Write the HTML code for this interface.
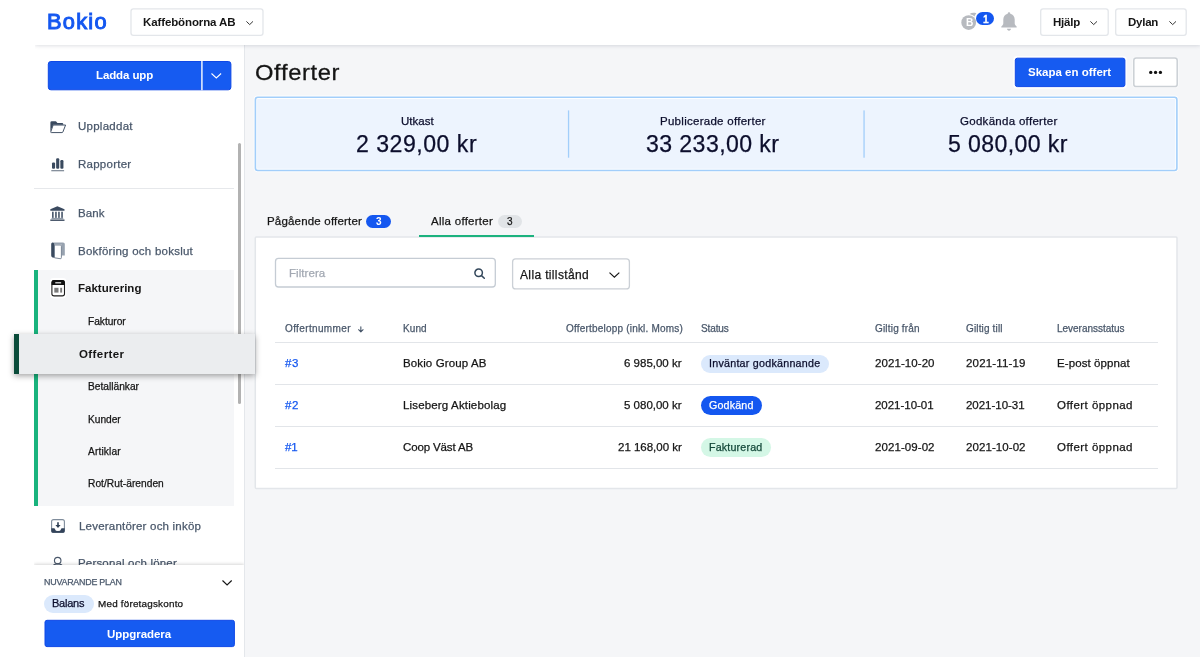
<!DOCTYPE html>
<html lang="sv">
<head>
<meta charset="utf-8">
<title>Offerter – Bokio</title>
<style>
*{box-sizing:border-box;margin:0;padding:0}
html,body{width:1200px;height:657px;overflow:hidden;background:#fff}
body{font-family:"Liberation Sans",sans-serif;font-size:11.5px;color:#151515;position:relative}
.layer{position:absolute;left:0;top:0;width:1200px;height:657px;pointer-events:none;will-change:transform}
.layer>*{position:absolute}
.t{position:absolute;white-space:nowrap;line-height:1;-webkit-text-stroke:0.25px;transform:rotate(0.01deg)}
svg{position:absolute;overflow:visible}
.blue{background:#1457f0}
.hbtn{top:8.5px;height:27.2px;border:1px solid #e2e5e9;border-radius:2.5px;background:#fff}
.inp{border:1px solid #c3c8ce;border-radius:3px;background:#fff}
.hr{left:275px;width:883px;height:1px;background:#e2e5e9}
.pill{border-radius:10px;height:18.5px}
</style>
</head>
<body>

<!-- ================= MAIN ================= -->
<div class="layer" id="main" style="z-index:1">
  <div style="left:245px;top:45px;width:955px;height:612px;background:#f5f6f8"></div>

  <svg style="left:0;top:0" width="1200" height="120" viewBox="0 0 1200 120">
    <rect x="1013.3" y="56" width="113.5" height="32.8" rx="3.6" fill="#fff" opacity=".9"/>
    <rect x="1015.3" y="58.2" width="109.6" height="28.4" rx="2" fill="#165bf1" stroke="#0f48e6" stroke-width="1"/>
    <rect x="1132.4" y="56.7" width="46.2" height="31.4" rx="3.6" fill="#fff" opacity=".7"/>
    <rect x="1133.8" y="58.1" width="43.4" height="28.5" rx="2.4" fill="#fff" stroke="#cbd0d5" stroke-width="1.5"/>
    <circle cx="1150.75" cy="72.4" r="1.65" fill="#111"/><circle cx="1155.55" cy="72.4" r="1.65" fill="#111"/><circle cx="1160.4" cy="72.4" r="1.65" fill="#111"/>
  </svg>

  <!-- summary -->
  <svg style="left:0;top:90px" width="1200" height="90" viewBox="0 90 1200 90">
    <rect x="255.4" y="97.3" width="921.5" height="73.2" rx="2.4" fill="#edf4fe" stroke="#fff" stroke-width="3.4" stroke-opacity=".85"/>
    <rect x="255.4" y="97.3" width="921.5" height="73.2" rx="2.4" fill="none" stroke="#a2cefa" stroke-width="1.6"/>
    <rect x="567.9" y="110.4" width="1.3" height="47.3" fill="#a2cefa"/>
    <rect x="863.4" y="110.4" width="1.3" height="47.3" fill="#a2cefa"/>
  </svg>

  <!-- tabs -->
  <div class="blue" style="left:366.3px;top:214.8px;width:24.6px;height:13.1px;border-radius:6.6px"></div>
  <div style="left:497.7px;top:214.8px;width:24.6px;height:13.1px;border-radius:6.6px;background:#e1e4e7"></div>

  <!-- table card -->
  <svg style="left:0;top:230px" width="1200" height="270" viewBox="0 230 1200 270">
    <rect x="255.3" y="237" width="921.7" height="251.6" rx="1" fill="#fff" stroke="#e3e6ea" stroke-width="1.5"/>
    <rect x="275.5" y="258.4" width="219.8" height="28.6" rx="3" fill="#fff" stroke="#c5ccd4" stroke-width="1.3"/>
    <rect x="512.6" y="258.9" width="116.8" height="30" rx="3" fill="#fff" stroke="#cbd0d6" stroke-width="1.3"/>
  </svg>
  <div style="left:419.2px;top:235px;width:115px;height:2px;background:#1cb27e"></div>

  
  <svg style="left:474.3px;top:267.7px" width="11.5" height="11.5" viewBox="0 0 11.5 11.5" fill="none" stroke="#33475b" stroke-width="1.5"><circle cx="4.65" cy="4.75" r="3.75"/><path d="M7.5 7.6 L10.3 10.2" stroke-linecap="round"/></svg>
  
  <svg style="left:609.2px;top:272px" width="10.8" height="6" viewBox="0 0 10.8 6" fill="none" stroke="#151515" stroke-width="1.15"><path d="M0.5 0.6 L5.4 5.2 L10.3 0.6"/></svg>

  <svg style="left:357.5px;top:325.5px" width="6" height="7" viewBox="0 0 6 7" fill="none" stroke="#3f4f63" stroke-width="1.05" stroke-linecap="round" stroke-linejoin="round"><path d="M2.85 0.7 V5.7 M0.6 3.7 L2.85 5.95 L5.1 3.7"/></svg>
  <div class="hr" style="top:342px"></div>
  <div class="hr" style="top:384px"></div>
  <div class="hr" style="top:426px"></div>
  <div class="hr" style="top:468px"></div>

  <div class="pill" style="left:701.2px;top:354.5px;width:127.6px;background:#dbe9fc"></div>
  <div class="pill blue" style="left:701.2px;top:396.3px;width:60.8px"></div>
  <div class="pill" style="left:701.2px;top:438.3px;width:70.2px;background:#d4f7e6"></div>

<span class="t" style="left:254.76px;top:60.60px;font-size:22.8px;color:#151515;letter-spacing:0.629px;transform:rotate(0.01deg) scaleX(1.0400);transform-origin:0 50%;-webkit-text-stroke:0.3px">Offerter</span>
<span class="t" style="left:1028.00px;top:66.70px;font-size:11.5px;color:#fff;font-weight:700;-webkit-text-stroke:0">Skapa en offert</span>
<span class="t" style="left:400.80px;top:115.95px;font-size:11.5px;color:#0c0e2c;letter-spacing:0.021px">Utkast</span>
<span class="t" style="left:356.00px;top:133.10px;font-size:23.1px;color:#0c0e2c;letter-spacing:0.504px">2 329,00 kr</span>
<span class="t" style="left:660.20px;top:115.95px;font-size:11.5px;color:#0c0e2c;letter-spacing:0.278px">Publicerade offerter</span>
<span class="t" style="left:646.20px;top:133.10px;font-size:23.1px;color:#0c0e2c;letter-spacing:0.418px">33 233,00 kr</span>
<span class="t" style="left:959.60px;top:115.95px;font-size:11.5px;color:#0c0e2c;letter-spacing:0.296px">Godkända offerter</span>
<span class="t" style="left:948.30px;top:133.10px;font-size:23.1px;color:#0c0e2c;letter-spacing:0.394px">5 080,00 kr</span>
<span class="t" style="left:267.00px;top:215.70px;font-size:11.5px;color:#151515;letter-spacing:0.186px">Pågående offerter</span>
<span class="t" style="left:376.00px;top:216.90px;font-size:10.0px;color:#fff;font-weight:700;-webkit-text-stroke:0">3</span>
<span class="t" style="left:431.20px;top:215.70px;font-size:11.5px;color:#151515;letter-spacing:0.270px">Alla offerter</span>
<span class="t" style="left:507.40px;top:216.90px;font-size:10.0px;color:#151515">3</span>
<span class="t" style="left:289.20px;top:268.30px;font-size:11.5px;color:#a3a9b3;letter-spacing:0.059px">Filtrera</span>
<span class="t" style="left:519.50px;top:269.00px;font-size:12.0px;color:#151515;letter-spacing:0.357px">Alla tillstånd</span>
<span class="t" style="left:285.00px;top:323.90px;font-size:10.0px;color:#4a586b;letter-spacing:0.366px">Offertnummer</span>
<span class="t" style="left:402.50px;top:323.90px;font-size:10.0px;color:#4a586b;letter-spacing:0.102px">Kund</span>
<span class="t" style="left:565.50px;top:323.90px;font-size:10.0px;color:#4a586b;letter-spacing:0.198px">Offertbelopp (inkl. Moms)</span>
<span class="t" style="left:701.20px;top:323.90px;font-size:10.0px;color:#4a586b;letter-spacing:-0.110px">Status</span>
<span class="t" style="left:875.40px;top:323.90px;font-size:10.0px;color:#4a586b;letter-spacing:0.187px">Giltig från</span>
<span class="t" style="left:966.30px;top:323.90px;font-size:10.0px;color:#4a586b;letter-spacing:0.152px">Giltig till</span>
<span class="t" style="left:1057.00px;top:323.90px;font-size:10.0px;color:#4a586b;letter-spacing:-0.017px">Leveransstatus</span>
<span class="t" style="left:285.00px;top:358.20px;font-size:11.5px;color:#1457f0;letter-spacing:0.604px">#3</span>
<span class="t" style="left:402.50px;top:358.20px;font-size:11.5px;color:#151515;letter-spacing:0.124px">Bokio Group AB</span>
<span class="t" style="left:623.80px;top:358.20px;font-size:11.5px;color:#151515">6 985,00 kr</span>
<span class="t" style="left:875.40px;top:358.20px;font-size:11.5px;color:#151515;letter-spacing:0.075px">2021-10-20</span>
<span class="t" style="left:966.30px;top:358.20px;font-size:11.5px;color:#151515;letter-spacing:0.169px">2021-11-19</span>
<span class="t" style="left:1057.00px;top:358.20px;font-size:11.5px;color:#151515;letter-spacing:0.099px">E-post öppnat</span>
<span class="t" style="left:285.00px;top:400.20px;font-size:11.5px;color:#1457f0;letter-spacing:0.604px">#2</span>
<span class="t" style="left:402.50px;top:400.20px;font-size:11.5px;color:#151515;letter-spacing:0.155px">Liseberg Aktiebolag</span>
<span class="t" style="left:623.80px;top:400.20px;font-size:11.5px;color:#151515">5 080,00 kr</span>
<span class="t" style="left:875.40px;top:400.20px;font-size:11.5px;color:#151515;letter-spacing:-0.025px">2021-10-01</span>
<span class="t" style="left:966.30px;top:400.20px;font-size:11.5px;color:#151515;letter-spacing:-0.025px">2021-10-31</span>
<span class="t" style="left:1057.00px;top:400.20px;font-size:11.5px;color:#151515;letter-spacing:0.448px">Offert öppnad</span>
<span class="t" style="left:285.00px;top:442.20px;font-size:11.5px;color:#1457f0;letter-spacing:-0.196px">#1</span>
<span class="t" style="left:402.50px;top:442.20px;font-size:11.5px;color:#151515;letter-spacing:-0.133px">Coop Väst AB</span>
<span class="t" style="left:617.50px;top:442.20px;font-size:11.5px;color:#151515;letter-spacing:-0.010px">21 168,00 kr</span>
<span class="t" style="left:875.40px;top:442.20px;font-size:11.5px;color:#151515;letter-spacing:0.075px">2021-09-02</span>
<span class="t" style="left:966.30px;top:442.20px;font-size:11.5px;color:#151515;letter-spacing:0.075px">2021-10-02</span>
<span class="t" style="left:1057.00px;top:442.20px;font-size:11.5px;color:#151515;letter-spacing:0.448px">Offert öppnad</span>
<span class="t" style="left:709.00px;top:358.10px;font-size:10.7px;color:#0c0e2c;letter-spacing:0.251px">Inväntar godkännande</span>
<span class="t" style="left:709.00px;top:400.10px;font-size:10.7px;color:#fff;letter-spacing:0.161px">Godkänd</span>
<span class="t" style="left:709.00px;top:442.10px;font-size:10.7px;color:#14493a;letter-spacing:0.174px">Fakturerad</span>
</div>

<!-- ================= SIDEBAR ================= -->
<div class="layer" id="side" style="z-index:2">
  <div style="left:34px;top:45px;width:210px;height:612px;background:#fff"></div>
  <div style="left:244px;top:45px;width:1px;height:612px;background:#e4e7eb"></div>

  <svg style="left:0;top:0" width="250" height="100" viewBox="0 0 250 100">
    <rect x="48.3" y="61.5" width="182.6" height="28.3" rx="2.6" fill="#165bf1" stroke="#0f48e6" stroke-width="1"/>
    <rect x="201.1" y="61" width="1.6" height="29.3" fill="#dfe8fd"/>
  </svg>
  <svg style="left:211.3px;top:73.3px" width="10.6" height="5.6" viewBox="0 0 10.6 5.6" fill="none" stroke="#fff" stroke-width="1.05"><path d="M0.5 0.5 L5.3 5 L10.1 0.5"/></svg>

  <div style="left:34px;top:188px;width:200.4px;height:1px;background:#e6e8eb"></div>

  <div style="left:38px;top:270px;width:196.4px;height:236px;background:#f5f6f8"></div>
  <div style="left:34px;top:270px;width:4px;height:236px;background:#19b37d"></div>

  <!-- scrollbar -->
  <div style="left:237.6px;top:142.6px;width:3.3px;height:261.4px;border-radius:2px;background:#b2b2b2"></div>


  <!-- folder -->
  <svg style="left:49.7px;top:120.8px" width="16.4" height="12.2" viewBox="0 0 16.4 12.2"><path d="M0.4 10.6 L0.4 1.6 Q0.4 0.3 1.7 0.3 L5.6 0.3 Q6.2 0.3 6.6 0.9 L7.4 2 L12.1 2 Q13.3 2 13.3 3.2 L13.3 3.8 L3.2 3.8 Z" fill="#3a4a5f"/><path d="M3.15 4.05 L15.6 4.05 L12.9 11 Q12.6 11.6 12 11.6 L1.4 11.6 Q0.5 11.6 0.8 10.8 Z" fill="#fff" stroke="#3a4a5f" stroke-width="0.95" stroke-linejoin="round"/></svg>
  <!-- bars -->
  <svg style="left:51px;top:157.6px" width="13.4" height="13.4" viewBox="0 0 13.4 13.4"><rect x="1" y="4.5" width="3.1" height="6.3" rx="1.1" fill="#3a4a5f"/><rect x="5.15" y="0.2" width="3.1" height="10.6" rx="1.1" fill="#3a4a5f"/><rect x="9.35" y="2.1" width="3.1" height="8.7" rx="1.1" fill="#3a4a5f"/><rect x="0.3" y="12.4" width="12.8" height="0.8" fill="#3a4a5f"/></svg>
  <!-- bank -->
  <svg style="left:50.4px;top:206.2px" width="14.8" height="15" viewBox="0 0 14.8 15"><path d="M7.4 0.2 L14.5 3.3 L14.5 4.7 L0.3 4.7 L0.3 3.3 Z" fill="#3a4a5f"/><rect x="2.1" y="5.7" width="1.5" height="6.2" fill="#3a4a5f"/><rect x="5.2" y="5.7" width="1.5" height="6.2" fill="#3a4a5f"/><rect x="8.2" y="5.7" width="1.5" height="6.2" fill="#3a4a5f"/><rect x="11.3" y="5.7" width="1.5" height="6.2" fill="#3a4a5f"/><rect x="1.5" y="11.9" width="11.8" height="1.2" fill="#8f9aa8"/><rect x="0.3" y="13.5" width="14.2" height="1.4" fill="#3a4a5f"/></svg>
  <!-- book -->
  <svg style="left:51px;top:241.9px" width="14" height="17.5" viewBox="0 0 14 17.5"><path d="M1.4 0.4 L12 0.4 Q13.8 0.4 13.8 2 L13.8 13.6 L10.4 13.6 L10.4 2.6 L3 2.6 Z" fill="#97a2af"/><path d="M1.6 0.5 Q0.2 0.5 0.2 2 L0.2 13.6 Q0.2 15.2 1.6 15.4 L3.4 15.7 L3.4 2.6 Q3.4 0.9 1.6 0.5 Z" fill="#3a4a5f"/><path d="M3.5 3 L9.3 3 Q10.4 3 10.4 4.2 L10.4 15.6 Q10.4 16.9 9.2 16.7 L3.5 15.8 Z" fill="#fff" stroke="#6d7b8c" stroke-width="0.9"/></svg>
  <!-- invoice (Fakturering) -->
  <svg style="left:49.8px;top:278.2px" width="16.4" height="20.2" viewBox="0 0 16.4 20.2"><rect x="0" y="0" width="16.4" height="20.2" rx="3.5" fill="#fff"/><rect x="1.9" y="2.6" width="12.6" height="15.3" rx="2.2" fill="#fff" stroke="#1d1d1d" stroke-width="1.1"/><path d="M1.6 6.9 L1.6 4.4 Q1.6 2.1 4 2.1 L12.4 2.1 Q14.8 2.1 14.8 4.4 L14.8 6.9 Z" fill="#111"/><rect x="5.2" y="4" width="6" height="1.5" rx="0.5" fill="#c4c4c4"/><rect x="4.3" y="9.8" width="4.2" height="4.8" fill="#7a7a7a"/><rect x="10.2" y="9.8" width="1.9" height="4.8" fill="#7a7a7a"/></svg>
  <!-- inbox -->
  <svg style="left:51px;top:519px" width="14" height="14" viewBox="0 0 14 14"><rect x="0.6" y="0.6" width="12.8" height="12.8" rx="2" fill="#fff" stroke="#7f8c9b" stroke-width="1.1"/><path d="M0.3 9.3 L3.2 9.3 Q3.8 9.3 3.9 9.9 Q4.4 12.1 7 12.1 Q9.6 12.1 10.1 9.9 Q10.2 9.3 10.8 9.3 L13.7 9.3 L13.7 12 Q13.7 13.8 12 13.8 L2 13.8 Q0.3 13.8 0.3 12 Z" fill="#33435a"/><path d="M6.2 3.2 L7.8 3.2 L7.8 6.1 L9.6 6.1 L7 8.9 L4.4 6.1 L6.2 6.1 Z" fill="#2f3f54"/></svg>
  <!-- person -->
  <svg style="left:52px;top:556.6px" width="12" height="14" viewBox="0 0 12 14" fill="none" stroke="#4a586b" stroke-width="1.15"><circle cx="5.7" cy="3.6" r="3.25"/><path d="M0.2 11.5 Q0.6 6.9 5.7 6.9 Q10.8 6.9 11.2 11.5"/></svg>

<span class="t" style="left:96.00px;top:70.40px;font-size:11.5px;color:#fff;font-weight:700;-webkit-text-stroke:0;letter-spacing:-0.114px">Ladda upp</span>
<span class="t" style="left:78.10px;top:121.40px;font-size:11.5px;color:#4a586b;letter-spacing:0.258px">Uppladdat</span>
<span class="t" style="left:78.10px;top:159.10px;font-size:11.5px;color:#4a586b;letter-spacing:0.249px">Rapporter</span>
<span class="t" style="left:78.10px;top:208.10px;font-size:11.5px;color:#4a586b;letter-spacing:0.079px">Bank</span>
<span class="t" style="left:78.10px;top:245.50px;font-size:11.5px;color:#4a586b;letter-spacing:0.242px">Bokföring och bokslut</span>
<span class="t" style="left:78.20px;top:282.70px;font-size:11.5px;color:#151515;font-weight:700;-webkit-text-stroke:0;letter-spacing:0.016px">Fakturering</span>
<span class="t" style="left:88.30px;top:317.00px;font-size:10.2px;color:#151515;letter-spacing:-0.034px">Fakturor</span>
<span class="t" style="left:88.00px;top:381.70px;font-size:10.2px;color:#151515">Betallänkar</span>
<span class="t" style="left:88.00px;top:414.60px;font-size:10.2px;color:#151515;letter-spacing:-0.032px">Kunder</span>
<span class="t" style="left:88.00px;top:446.90px;font-size:10.2px;color:#151515;letter-spacing:0.128px">Artiklar</span>
<span class="t" style="left:88.30px;top:479.30px;font-size:10.2px;color:#151515;letter-spacing:0.032px">Rot/Rut-ärenden</span>
<span class="t" style="left:78.50px;top:520.60px;font-size:11.5px;color:#4a586b;letter-spacing:0.203px">Leverantörer och inköp</span>
<span class="t" style="left:78.10px;top:558.40px;font-size:11.5px;color:#4a586b;letter-spacing:0.167px">Personal och löner</span>
</div>

<!-- ================= BOTTOM PLAN PANEL ================= -->
<div class="layer" id="bottom" style="z-index:3">
  <div style="left:34px;top:565px;width:210px;height:92px;background:#fff;box-shadow:0 -1px 3px rgba(0,0,0,.16);clip-path:inset(-6px 0 0 0)"></div>
  <div style="left:244px;top:564px;width:1px;height:93px;background:#e4e7eb"></div>
  <svg style="left:221.6px;top:579.8px" width="10.2" height="5.6" viewBox="0 0 10.2 5.6" fill="none" stroke="#151515" stroke-width="1.15"><path d="M0.5 0.5 L5.1 5 L9.7 0.5"/></svg>
  <div style="left:44.4px;top:594.7px;width:49.2px;height:18.6px;border-radius:9.3px;background:#dbe9fc"></div>
  <svg style="left:0;top:600px" width="250" height="57" viewBox="0 600 250 57"><rect x="45" y="620.3" width="189.4" height="26.3" rx="2" fill="#165bf1" stroke="#0f48e6" stroke-width="1"/></svg>
<span class="t" style="left:44.40px;top:578.20px;font-size:8.9px;color:#4a586b;letter-spacing:-0.216px">NUVARANDE PLAN</span>
<span class="t" style="left:52.40px;top:598.30px;font-size:11.0px;color:#0c0e2c;letter-spacing:-0.247px">Balans</span>
<span class="t" style="left:97.60px;top:599.20px;font-size:9.9px;color:#151515;letter-spacing:0.206px">Med företagskonto</span>
<span class="t" style="left:106.80px;top:628.80px;font-size:11.5px;color:#fff;font-weight:700;-webkit-text-stroke:0;letter-spacing:-0.038px">Uppgradera</span>
</div>

<!-- ================= ACTIVE ITEM ================= -->
<div class="layer" id="active" style="z-index:4">
  <div style="left:14px;top:334.2px;width:241.4px;height:39.4px;background:#ebedef;box-shadow:0 1.5px 6px rgba(0,0,0,.36)"></div>
  <div style="left:14px;top:334.2px;width:5px;height:39.4px;background:#0b4c3a"></div>
<span class="t" style="left:78.70px;top:348.70px;font-size:11.5px;color:#151515;font-weight:700;-webkit-text-stroke:0;letter-spacing:0.414px">Offerter</span>
</div>

<!-- ================= HEADER ================= -->
<div class="layer" id="header" style="z-index:5">
  <div style="left:35px;top:0;width:1165px;height:45px;background:#fff;box-shadow:0 1px 3.5px rgba(40,50,75,.15);clip-path:inset(0 0 -8px 0)"></div>
  <svg style="left:0;top:0" width="1200" height="45" viewBox="0 0 1200 45" fill="#fff" stroke="#e3e6ea" stroke-width="1.3">
    <rect x="131" y="8.9" width="132" height="26.4" rx="2.4"/>
    <rect x="1040.7" y="8.9" width="67.5" height="26.4" rx="2.4"/>
    <rect x="1115.7" y="8.9" width="70.5" height="26.4" rx="2.4"/>
  </svg>
  <svg style="left:245.6px;top:20.9px" width="7.4" height="4.2" viewBox="0 0 7.4 4.2" fill="none" stroke="#333" stroke-width="1"><path d="M0.4 0.4 L3.7 3.6 L7 0.4"/></svg>
  
  <svg style="left:1090.3px;top:20.9px" width="7.4" height="4.2" viewBox="0 0 7.4 4.2" fill="none" stroke="#333" stroke-width="1"><path d="M0.4 0.4 L3.7 3.6 L7 0.4"/></svg>
  
  <svg style="left:1168.5px;top:20.9px" width="7.4" height="4.2" viewBox="0 0 7.4 4.2" fill="none" stroke="#333" stroke-width="1"><path d="M0.4 0.4 L3.7 3.6 L7 0.4"/></svg>

  <!-- B coin -->
  <svg style="left:960px;top:11px" width="20" height="20" viewBox="0 0 20 20"><circle cx="8.7" cy="11.6" r="7.4" fill="#b7babf"/><path d="M9.6 2.9 C11.6 1.6 14.2 1.6 16.4 2.3 C15.6 3.3 15 4.2 14.4 5.4 C13 4.1 11.5 3.3 9.6 2.9 Z" fill="#b7babf"/></svg>
  <div class="blue" style="left:975.6px;top:12.1px;width:18.2px;height:13px;border-radius:6.5px"></div>
  <!-- bell -->
  <svg style="left:1001px;top:12px" width="16" height="19" viewBox="0 0 16 19"><path d="M8 0.3 C8.8 0.3 9.3 0.9 9.3 1.7 C12 2.3 13.7 4.6 13.7 7.6 L13.7 11.2 C13.7 12.6 14.6 13.4 15.6 14.4 C16 14.9 15.8 15.6 15 15.6 L1 15.6 C0.2 15.6 0 14.9 0.4 14.4 C1.4 13.4 2.3 12.6 2.3 11.2 L2.3 7.6 C2.3 4.6 4 2.3 6.7 1.7 C6.7 0.9 7.2 0.3 8 0.3 Z M6 16.8 L10 16.8 C10 17.9 9.1 18.7 8 18.7 C6.9 18.7 6 17.9 6 16.8 Z" fill="#b7babf"/></svg>
<span class="t" style="left:47.30px;top:10.85px;font-size:21.8px;color:#1457f0;letter-spacing:1.250px;-webkit-text-stroke:1.0px #1457f0">Bokio</span>
<span class="t" style="left:142.60px;top:17.05px;font-size:11.5px;color:#151515;font-weight:700;-webkit-text-stroke:0;letter-spacing:-0.118px">Kaffebönorna AB</span>
<span class="t" style="left:1052.80px;top:17.05px;font-size:11.5px;color:#151515;font-weight:700;-webkit-text-stroke:0;letter-spacing:-0.223px">Hjälp</span>
<span class="t" style="left:1127.80px;top:17.05px;font-size:11.5px;color:#151515;font-weight:700;-webkit-text-stroke:0;letter-spacing:-0.248px">Dylan</span>
<span class="t" style="left:966.10px;top:18.20px;font-size:10.2px;color:#fff;font-weight:700;-webkit-text-stroke:0">B</span>
<span class="t" style="left:982.50px;top:14.50px;font-size:10.3px;color:#fff;-webkit-text-stroke:0.6px #fff">1</span>
</div>

</body>
</html>
